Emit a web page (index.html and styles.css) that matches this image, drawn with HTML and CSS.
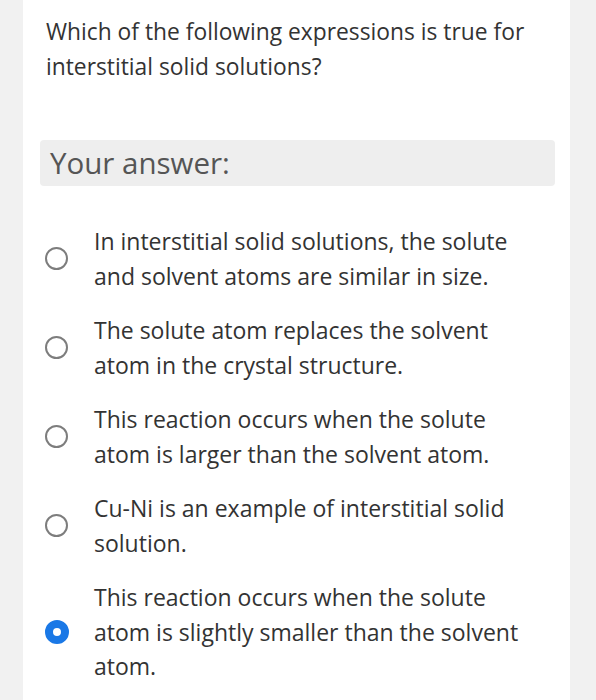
FILE: index.html
```html
<!DOCTYPE html>
<html>
<head>
<meta charset="utf-8">
<link rel="stylesheet" href="styles.css">
</head>
<body>
<div class="page">
  <div class="card">
    <p class="question">Which of the following expressions is true for interstitial solid solutions?</p>
    <div class="answer-label">Your answer:</div>
    <div class="options">
      <div class="option"><span class="radio"></span><span class="text">In interstitial solid solutions, the solute and solvent atoms are similar in size.</span></div>
      <div class="option"><span class="radio"></span><span class="text">The solute atom replaces the solvent atom in the crystal structure.</span></div>
      <div class="option"><span class="radio"></span><span class="text">This reaction occurs when the solute atom is larger than the solvent atom.</span></div>
      <div class="option"><span class="radio"></span><span class="text">Cu-Ni is an example of interstitial solid solution.</span></div>
      <div class="option"><span class="radio checked"></span><span class="text">This reaction occurs when the solute atom is slightly smaller than the solvent atom.</span></div>
    </div>
  </div>
</div>
</body>
</html>
```
FILE: styles.css
```css
html, body {
  margin: 0;
  padding: 0;
}
body {
  background: #f1f1f1;
  font-family: "Open Sans", "Noto Sans", sans-serif;
  color: #333;
}
.page {
  padding: 0 26px 0 23px;
}
.card {
  background: #fff;
  min-height: 700px;
  padding: 14px 15px 0 17px;
  box-sizing: border-box;
}
.question {
  margin: 0 0 0 6px;
  font-size: 22.8px;
  line-height: 35px;
  width: 500px;
}
.answer-label {
  margin-top: 56px;
  background: #eeeeee;
  border-radius: 4px;
  height: 46px;
  line-height: 46px;
  font-size: 29.5px;
  color: #555;
  padding-left: 10px;
}
.options {
  margin-top: 38px;
  display: flex;
  flex-direction: column;
  gap: 20px;
}
.option {
  display: flex;
  align-items: center;
  font-size: 23px;
  line-height: 34.5px;
}
.radio {
  flex: none;
  width: 23px;
  height: 23px;
  box-sizing: border-box;
  border: 2px solid #7d7d7d;
  border-radius: 50%;
  margin: 0 26px 0 5px;
}
.radio.checked {
  width: 24px;
  height: 24px;
  border: 8px solid #1a78e6;
  margin: 0 25px 0 5px;
}
.text {
  width: 432px;
}
```
